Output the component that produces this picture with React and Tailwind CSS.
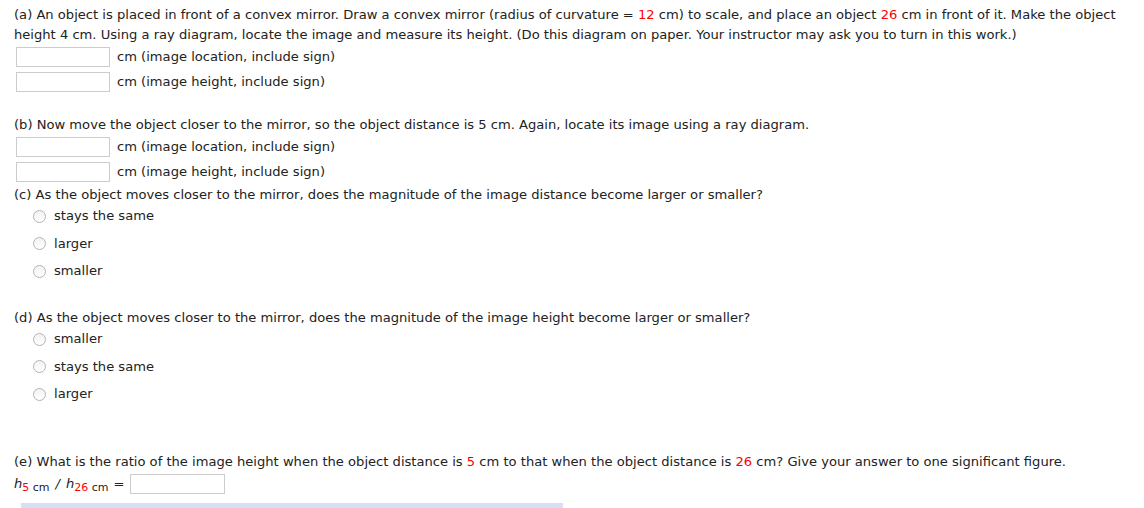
import React from "react";

const red = "text-[#ff0000]";

function AnswerBox({ label }) {
  return (
    <div className="flex items-center h-[20px]">
      <div className="w-[94px] h-[20px] border border-[#cccccc] bg-white ml-[2px]" />
      <span className="ml-[7px]">{label}</span>
    </div>
  );
}

function Radio({ label }) {
  return (
    <div className="flex items-center h-[20px] ml-[19px]">
      <span className="w-[13px] h-[13px] rounded-full border border-[#b4b4b4] bg-gradient-to-b from-[#f2f2f2] to-white" />
      <span className="ml-[8px]">{label}</span>
    </div>
  );
}

export default function App() {
  return (
    <div className="bg-white text-[#222222] font-['DejaVu_Sans','Verdana',sans-serif] text-[13.1px] leading-[20px] pl-[14px] pt-[5px] w-[1144px] h-[508px] overflow-hidden">
      <p className="w-[1125px]">
        (a) An object is placed in front of a convex mirror. Draw a convex mirror (radius of curvature = <span className={red}>12</span> cm) to scale, and place an object <span className={red}>26</span> cm in front of it. Make the object height 4 cm. Using a ray diagram, locate the image and measure its height. (Do this diagram on paper. Your instructor may ask you to turn in this work.)
      </p>
      <div className="flex flex-col gap-[5px] mt-[2px]">
        <AnswerBox label="cm (image location, include sign)" />
        <AnswerBox label="cm (image height, include sign)" />
      </div>

      <p className="mt-[23px]">
        (b) Now move the object closer to the mirror, so the object distance is 5 cm. Again, locate its image using a ray diagram.
      </p>
      <div className="flex flex-col gap-[5px] mt-[2px]">
        <AnswerBox label="cm (image location, include sign)" />
        <AnswerBox label="cm (image height, include sign)" />
      </div>

      <p className="mt-[3px]">
        (c) As the object moves closer to the mirror, does the magnitude of the image distance become larger or smaller?
      </p>
      <div className="flex flex-col gap-[7.5px] mt-[1px]">
        <Radio label="stays the same" />
        <Radio label="larger" />
        <Radio label="smaller" />
      </div>

      <p className="mt-[27px]">
        (d) As the object moves closer to the mirror, does the magnitude of the image height become larger or smaller?
      </p>
      <div className="flex flex-col gap-[7.5px] mt-[1px]">
        <Radio label="smaller" />
        <Radio label="stays the same" />
        <Radio label="larger" />
      </div>

      <p className="mt-[48px]">
        (e) What is the ratio of the image height when the object distance is <span className={red}>5</span> cm to that when the object distance is <span className={red}>26</span> cm? Give your answer to one significant figure.
      </p>
      <div className="flex items-center h-[20px] mt-[2px]">
        <span className="italic">h</span>
        <span className="text-[11px] relative top-[4px]">
          <span className={red}>5</span> cm
        </span>
        <span className="italic mx-[6px]">/</span>
        <span className="italic">h</span>
        <span className="text-[11px] relative top-[4px]">
          <span className={red}>26</span> cm
        </span>
        <span className="ml-[5px]">=</span>
        <div className="w-[95px] h-[20px] border border-[#cccccc] bg-white ml-[5px]" />
      </div>
      <div className="mt-[9px] ml-[7px] w-[542px] h-[6px] bg-[#d6dff4]" />
    </div>
  );
}
